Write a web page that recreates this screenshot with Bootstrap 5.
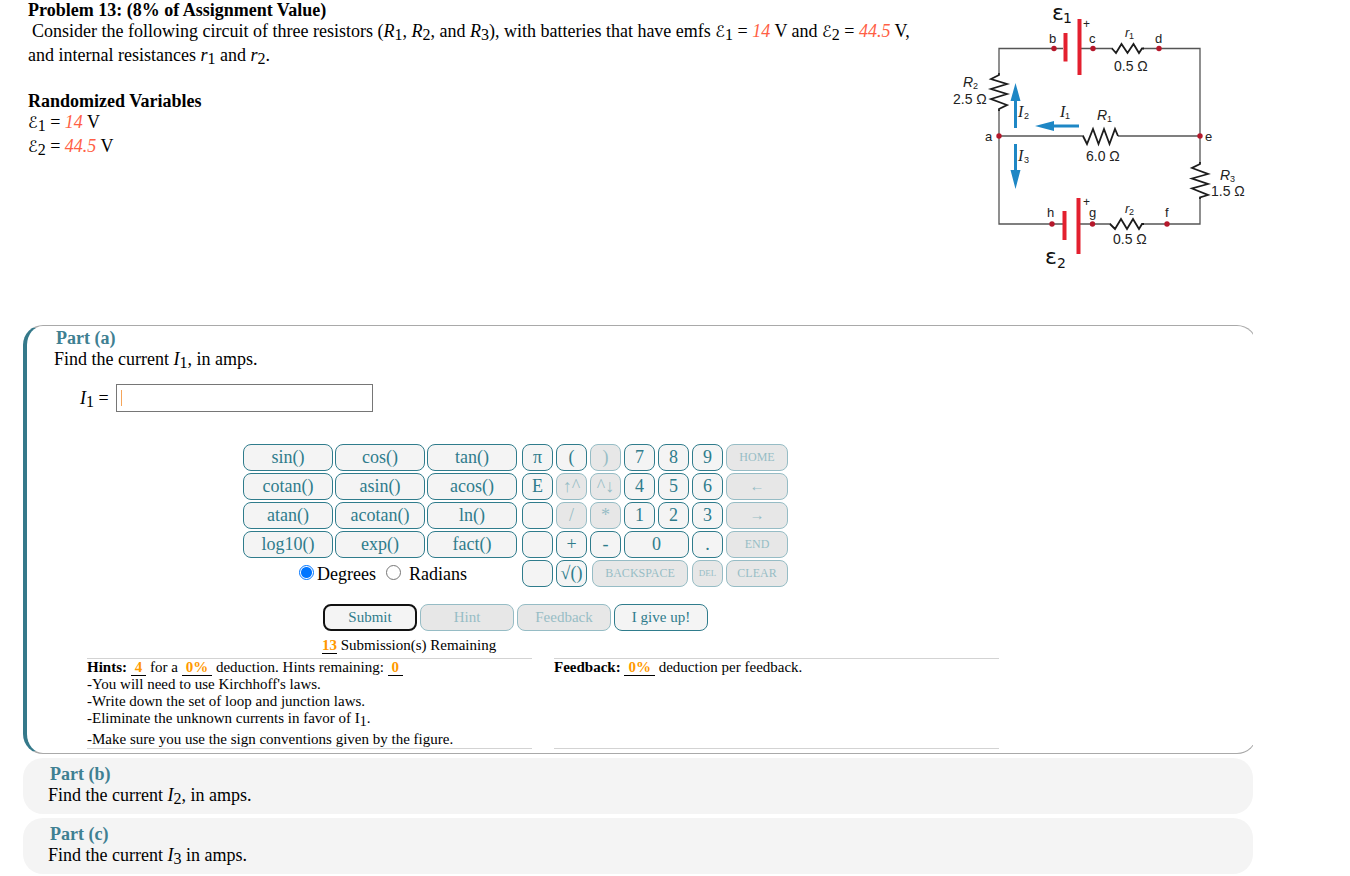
<!DOCTYPE html>
<html lang="en">
<head>
<meta charset="utf-8">
<meta name="viewport" content="width=device-width, initial-scale=1">
<title>Problem 13</title>
<link rel="stylesheet" href="https://cdn.jsdelivr.net/npm/bootstrap@5.3.0/dist/css/bootstrap.min.css">
<style>
:root { --teal: #2f7c8c; }
body { font-family: "Liberation Serif", "Times New Roman", serif; font-size: 18px; line-height: 24px; color: #000; background: #fff; }
.page { padding: 0 97px 2px 23px; }
h1, h2, h3, p { margin: 0; font-size: 18px; line-height: 21px; }
h1, h2 { font-weight: 700; margin-bottom: -2px; }
.tall { line-height: 24px; }
sub { font-size: 16px; line-height: 8px; vertical-align: -3px; bottom: 0; }
.statement { padding: 0 16px 0 5px; }
.lead-in { padding-left: 4px; }
.intro { min-height: 325px; }
.emf { font-family: "DejaVu Sans", sans-serif; font-size: 16px; line-height: 16px; }
.val { color: #ff5f45; font-style: italic; }
.figure-box { width: 308px; }
h3 { font-weight: 700; color: #3f8092; padding-left: 2px; }
.part-open { width: calc(100% + 4px); clip-path: inset(0 4px 0 0); border: 1px solid #a9a9a9; border-left: 4px solid #35798a; border-radius: 20px; padding: 2px 27px 4px; }
.part-closed { background: #f4f4f4; border-radius: 20px; padding: 6px 25px 8px; margin-top: 4px; }
.answer { padding: 14px 0 0 26px; gap: 7px; }
.answer input { width: 257px; height: 28px; border: 1px solid #767676; padding: 0 4px; outline: 0; }
.answer-field { position: relative; }
.answer-field::after { content: ""; position: absolute; left: 5px; top: 6px; width: 1px; height: 16px; background: #f5a55a; }
.pad { padding: 32px 0 0 189px; gap: 5px; }
.fn-keys { display: grid; grid-template-columns: repeat(3, 90px); grid-auto-rows: 27px; gap: 2px; }
.num-keys { display: grid; grid-template-columns: repeat(6, 31px) 62px; grid-auto-rows: 27px; gap: 2px 3px; }
.key { --bs-btn-padding-x: 0; --bs-btn-padding-y: 0; --bs-btn-font-size: 18px; --bs-btn-line-height: 25px; --bs-btn-border-radius: 8px; --bs-btn-color: var(--teal); --bs-btn-bg: #f4f4f4; --bs-btn-border-color: var(--teal); --bs-btn-disabled-color: var(--teal); --bs-btn-disabled-bg: #d0d0d0; --bs-btn-disabled-border-color: var(--teal); --bs-btn-disabled-opacity: .5; height: 27px; font-family: inherit; white-space: nowrap; }
.key-word { --bs-btn-font-size: 12px; }
.key-arrow { --bs-btn-font-size: 15px; }
.key-tiny { --bs-btn-font-size: 9px; }
.wide2 { grid-column: span 2; }
.wide3 { grid-column: span 3; margin: 0 1px 0 2px; }
.angle { grid-column: span 3; padding-left: 56px; gap: 3px; }
.angle .form-check-input { width: 15px; height: 15px; margin: 0 0 3px; border: 1px solid #767676; flex: none; }
.angle .form-check-input:checked { border-color: #0075ff; background-color: #fff; background-image: radial-gradient(circle, #0075ff 0 5px, #fff 6px); }
.angle .second { margin-left: 7px; }
.angle .second + label { padding-left: 5px; }
.actions { padding: 17px 0 0 269px; gap: 3px; }
.actions .key { width: 94px; --bs-btn-font-size: 15px; }
.actions .go { border: 2px solid #111; --bs-btn-line-height: 23px; }
.remaining { padding: 6px 0 0 268px; }
.remaining, .notes, .notes p { font-size: 15px; line-height: 17px; }
.count { color: #ff9900; font-weight: 700; border-bottom: 1px solid #000; display: inline-block; line-height: 16px; text-align: center; padding: 0 4px; }
.remaining .count { padding: 0; }
.notes { padding: 4px 0 0 33px; gap: 22px; margin-right: 230px; }
.note-col { border-top: 1px solid #d3d3d3; border-bottom: 1px solid #d3d3d3; flex: 1 1 0; }
.note-col sub { font-size: 14px; }
.fig-text { font-family: "Liberation Sans", Arial, sans-serif; fill: #222; }
</style>
</head>
<body>
<main class="page">
  <section class="intro d-flex">
    <div class="statement flex-grow-1">
      <h1>Problem 13: (8% of Assignment Value)</h1>
      <p class="tall"><span class="lead-in">Consider</span> the following circuit of three resistors (<i>R</i><sub>1</sub>, <i>R</i><sub>2</sub>, and <i>R</i><sub>3</sub>), with batteries that have emfs <span class="emf">ℰ</span><sub>1</sub> = <span class="val">14</span> V and <span class="emf">ℰ</span><sub>2</sub> = <span class="val">44.5</span> V, and internal resistances <i>r</i><sub>1</sub> and <i>r</i><sub>2</sub>.</p>
      <h2 class="mt-4">Randomized Variables</h2>
      <p class="tall"><span class="emf">ℰ</span><sub>1</sub> = <span class="val">14</span> V</p>
      <p class="tall"><span class="emf">ℰ</span><sub>2</sub> = <span class="val">44.5</span> V</p>
    </div>
    <div class="figure-box flex-shrink-0">
      <svg class="d-block w-100" viewBox="945 0 308 280" role="img" aria-label="Circuit with three resistors and two batteries">
        <g fill="none" stroke="#555" stroke-width="1.3">
          <path d="M999 73V48.500H1063M1081 48.500H1113M1143 48.500H1200V163M1200 198V224H1142M1111 224H1080M1063 224H999V110M999 136H1084M1118 136H1200"/>
          <g stroke="#1c1c1c" stroke-width="1.800" stroke-linejoin="miter">
            <path d="M999 73V75L991 79L1007 84L991 89L1007 94L991 99L1007 105L999 109V111"/>
            <path d="M1112 48.500L1116 53L1121.500 44L1127.500 53L1133.500 44L1139 53L1142 48.500H1144"/>
            <path d="M1083 136L1087 144L1093 129L1098.500 144L1104 129L1109.500 144L1115 129L1118 136"/>
            <path d="M1200 162V164L1192 168L1208 174L1192 178.500L1208 184L1192 188.500L1208 195L1200 197.500V199"/>
            <path d="M1110 224L1115 229L1121 219L1127 229L1133 219L1139 229L1142 224H1144"/>
          </g>
        </g>
        <g stroke="#e3202f" stroke-width="4"><path d="M1065.500 33V61.500M1079.500 19V75M1064.500 211V240M1078.500 198V254"/></g>
        <g fill="#b5182b"><circle cx="1054" cy="48.500" r="2.700"/><circle cx="1093" cy="48.500" r="2.700"/><circle cx="1159" cy="48.500" r="2.700"/><circle cx="999" cy="136" r="2.700"/><circle cx="1200" cy="136" r="2.700"/><circle cx="1052" cy="224" r="2.700"/><circle cx="1092.500" cy="224" r="2.700"/><circle cx="1167" cy="224" r="2.700"/></g>
        <g fill="#1e87c5">
          <path d="M1015.500 83L1020.500 101H1017V128H1014V101H1010.500Z"/>
          <path d="M1035 126L1054 121V124.500H1079V127.500H1054V131Z"/>
          <path d="M1015.500 189L1020.500 170H1017V144H1014V170H1010.500Z"/>
        </g>
        <g class="fig-text" font-size="13">
          <text x="1049" y="43">b</text><text x="1089" y="43">c</text><text x="1155" y="43">d</text>
          <text x="985" y="141">a</text><text x="1205" y="141">e</text><text x="1047" y="217">h</text><text x="1089" y="217">g</text><text x="1165" y="217">f</text>
          <text x="1083" y="28" font-size="12">+</text><text x="1083" y="206" font-size="12">+</text>
          <g font-size="14"><text x="953" y="104">2.5 Ω</text><text x="1114" y="71">0.5 Ω</text><text x="1086" y="161">6.0 Ω</text><text x="1211" y="196">1.5 Ω</text><text x="1113" y="244">0.5 Ω</text></g>
          <g font-style="italic">
            <g font-size="14"><text x="963" y="87">R</text><text x="1097" y="120">R</text><text x="1220" y="180">R</text></g><text x="1125" y="37">r</text><text x="1125" y="213">r</text>
            <g font-family="Liberation Serif" font-size="16"><text x="1018" y="117">I</text><text x="1060" y="117">I</text><text x="1018" y="161">I</text></g>
          </g>
          <g font-size="9"><text x="973" y="89">2</text><text x="1107" y="122">1</text><text x="1230" y="182">3</text><text x="1129" y="39">1</text><text x="1129" y="215">2</text><text x="1024" y="119">2</text><text x="1065" y="119">1</text><text x="1024" y="163">3</text></g>
        </g>
        <g font-family="DejaVu Sans" fill="#111"><g font-size="22"><text x="1052" y="20">ε</text><text x="1045" y="264">ε</text></g><text x="1063" y="23" font-size="14">1</text><text x="1057" y="268" font-size="14">2</text></g>
      </svg>
    </div>
  </section>

  <section class="part-open">
    <h3>Part (a)</h3>
    <p>Find the current <i>I</i><sub>1</sub>, in amps.</p>
    <div class="answer d-flex align-items-center">
      <label for="ans"><i>I</i><sub>1</sub> =</label>
      <div class="answer-field d-flex"><input id="ans" type="text"></div>
    </div>
    <div class="pad d-flex">
      <div class="fn-keys">
        <button class="btn key">sin()</button><button class="btn key">cos()</button><button class="btn key">tan()</button>
        <button class="btn key">cotan()</button><button class="btn key">asin()</button><button class="btn key">acos()</button>
        <button class="btn key">atan()</button><button class="btn key">acotan()</button><button class="btn key">ln()</button>
        <button class="btn key">log10()</button><button class="btn key">exp()</button><button class="btn key">fact()</button>
        <div class="angle d-flex align-items-center">
          <input class="form-check-input" type="radio" name="angle" id="deg" checked><label for="deg">Degrees</label>
          <input class="form-check-input second" type="radio" name="angle" id="rad"><label for="rad">Radians</label>
        </div>
      </div>
      <div class="num-keys">
        <button class="btn key">π</button><button class="btn key">(</button><button class="btn key" disabled>)</button><button class="btn key">7</button><button class="btn key">8</button><button class="btn key">9</button><button class="btn key key-word" disabled>HOME</button>
        <button class="btn key">E</button><button class="btn key" disabled>↑^</button><button class="btn key" disabled>^↓</button><button class="btn key">4</button><button class="btn key">5</button><button class="btn key">6</button><button class="btn key key-arrow" disabled>←</button>
        <button class="btn key" aria-label="Blank"></button><button class="btn key" disabled>/</button><button class="btn key" disabled>*</button><button class="btn key">1</button><button class="btn key">2</button><button class="btn key">3</button><button class="btn key key-arrow" disabled>→</button>
        <button class="btn key" aria-label="Blank"></button><button class="btn key">+</button><button class="btn key">-</button><button class="btn key wide2">0</button><button class="btn key">.</button><button class="btn key key-word" disabled>END</button>
        <button class="btn key" aria-label="Blank"></button><button class="btn key">√()</button><button class="btn key key-word wide3" disabled>BACKSPACE</button><button class="btn key key-tiny" disabled>DEL</button><button class="btn key key-word" disabled>CLEAR</button>
      </div>
    </div>
    <div class="actions d-flex">
      <button class="btn key go">Submit</button><button class="btn key" disabled>Hint</button><button class="btn key" disabled>Feedback</button><button class="btn key">I give up!</button>
    </div>
    <p class="remaining"><span class="count">13</span> Submission(s) Remaining</p>
    <div class="notes d-flex">
      <div class="note-col">
        <p><b>Hints:</b> <span class="count">4</span> for a <span class="count">0%</span> deduction. Hints remaining: <span class="count">0</span></p>
        <p>-You will need to use Kirchhoff's laws.</p>
        <p>-Write down the set of loop and junction laws.</p>
        <p class="mb-1">-Eliminate the unknown currents in favor of I<sub>1</sub>.</p>
        <p>-Make sure you use the sign conventions given by the figure.</p>
      </div>
      <div class="note-col">
        <p><b>Feedback:</b> <span class="count">0%</span> deduction per feedback.</p>
      </div>
    </div>
  </section>

  <section class="part-closed">
    <h3>Part (b)</h3>
    <p>Find the current <i>I</i><sub>2</sub>, in amps.</p>
  </section>
  <section class="part-closed">
    <h3>Part (c)</h3>
    <p>Find the current <i>I</i><sub>3</sub> in amps.</p>
  </section>
</main>
<script src="https://cdn.jsdelivr.net/npm/bootstrap@5.3.0/dist/js/bootstrap.bundle.min.js"></script>
</body>
</html>
